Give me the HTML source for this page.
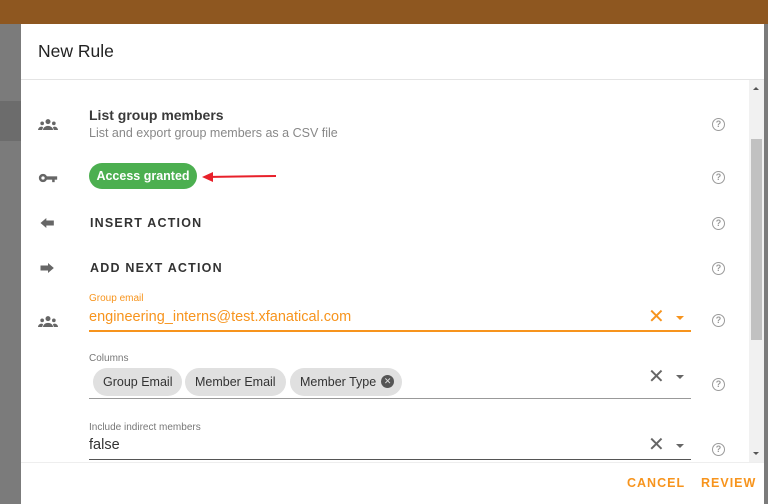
<!DOCTYPE html>
<html><head><style>
*{margin:0;padding:0;box-sizing:border-box}
body{width:768px;height:504px;overflow:hidden;background:#7b7b7b;font-family:"Liberation Sans",Arial,sans-serif;position:relative}
.top{position:absolute;left:0;top:0;width:768px;height:24px;background:#8e5720}
.band{position:absolute;left:0;top:101px;width:21px;height:40px;background:#6c6c6c}
.dlg{position:absolute;left:21px;top:24px;width:743px;height:480px;background:#fff}
.t{position:absolute;color:#222}
.ic{position:absolute;left:17px;width:20px;height:16px}
.help{position:absolute;left:691px;width:13px;height:13px;border:1.3px solid #9a9a9a;border-radius:50%;font-size:9px;color:#9a9a9a;text-align:center;line-height:11px;font-weight:bold}
.lbl{position:absolute;left:68px;font-size:10px;color:#777}
.chip{position:absolute;top:344px;height:28px;border-radius:14px;background:#e0e0e0;font-size:12.5px;color:#333;line-height:28px;padding:0 10px}
.x{position:absolute;font-size:20px;color:#666;line-height:20px}
.arr{position:absolute;width:0;height:0;border-left:4px solid transparent;border-right:4px solid transparent;border-top:4px solid #666}
</style></head><body>
<div class="top"></div>
<div class="band"></div>
<div class="dlg">
 <div class="t" style="left:17px;top:17px;font-size:17.5px">New Rule</div>
 <div style="position:absolute;left:0;top:55px;width:743px;height:1px;background:#e4e4e4"></div>
 <div style="position:absolute;left:728px;top:56px;width:15px;height:382px;background:#f1f1f1"></div>
 <div style="position:absolute;left:730px;top:115px;width:11px;height:201px;background:#c1c1c1"></div>
 <div style="position:absolute;left:732px;top:63px;border-left:3px solid transparent;border-right:3px solid transparent;border-bottom:3px solid #555"></div>
 <div style="position:absolute;left:732px;top:428px;border-left:3px solid transparent;border-right:3px solid transparent;border-top:3px solid #555"></div>

 <svg class="ic" style="top:93px" viewBox="0 0 24 16"><g fill="#666"><circle cx="12" cy="4" r="3"/><circle cx="5" cy="6" r="2.2"/><circle cx="19" cy="6" r="2.2"/><path d="M6 14c0-3 3-5 6-5s6 2 6 5z"/><path d="M0 14c0-2 2-4 4-4 1 0 2 .5 2 1l-1 3z"/><path d="M24 14c0-2-2-4-4-4-1 0-2 .5-2 1l1 3z"/></g></svg>
 <div class="t" style="left:68px;top:83px;font-size:14px;font-weight:bold;color:#3a3a3a">List group members</div>
 <div class="t" style="left:68px;top:102px;font-size:12.5px;color:#888">List and export group members as a CSV file</div>
 <div class="help" style="top:94px">?</div>

 <svg class="ic" style="top:146px" viewBox="0 0 24 16"><g fill="#666"><circle cx="6" cy="8" r="5"/><rect x="9" y="6" width="14" height="4"/><rect x="17" y="8" width="3" height="5"/></g><circle cx="6" cy="8" r="2" fill="#fff"/></svg>
 <div style="position:absolute;left:68px;top:139px;width:108px;height:26px;border-radius:13px;background:#4caf50;color:#fff;font-size:12.5px;font-weight:bold;line-height:26px;text-align:center">Access granted</div>
 <svg style="position:absolute;left:180px;top:147px" width="76" height="12"><path d="M4 6 L75 5" stroke="#e8202a" stroke-width="2"/><path d="M1 6 L12 1 L12 11z" fill="#e8202a"/></svg>
 <div class="help" style="top:147px">?</div>

 <svg class="ic" style="top:191px" viewBox="0 0 24 16"><path d="M3 8 L10 2 V5 H19 V11 H10 V14z" fill="#666"/></svg>
 <div class="t" style="left:69px;top:192px;font-size:12.5px;font-weight:bold;letter-spacing:1.2px;color:#333">INSERT ACTION</div>
 <div class="help" style="top:193px">?</div>

 <svg class="ic" style="top:236px" viewBox="0 0 24 16"><path d="M19 8 L12 2 V5 H3 V11 H12 V14z" fill="#666"/></svg>
 <div class="t" style="left:69px;top:237px;font-size:12.5px;font-weight:bold;letter-spacing:1.2px;color:#333">ADD NEXT ACTION</div>
 <div class="help" style="top:238px">?</div>

 <svg class="ic" style="top:290px" viewBox="0 0 24 16"><g fill="#666"><circle cx="12" cy="4" r="3"/><circle cx="5" cy="6" r="2.2"/><circle cx="19" cy="6" r="2.2"/><path d="M6 14c0-3 3-5 6-5s6 2 6 5z"/><path d="M0 14c0-2 2-4 4-4 1 0 2 .5 2 1l-1 3z"/><path d="M24 14c0-2-2-4-4-4-1 0-2 .5-2 1l1 3z"/></g></svg>
 <div class="lbl" style="top:269px;color:#f7941d">Group email</div>
 <div class="t" style="left:68px;top:285px;font-size:14.5px;color:#f7941d">engineering_interns@test.xfanatical.com</div>
 <div class="x" style="left:627px;top:283px;color:#f7941d">✕</div>
 <div class="arr" style="left:655px;top:292px;border-top-color:#f7941d"></div>
 <div style="position:absolute;left:68px;top:306px;width:602px;height:2px;background:#f7941d"></div>
 <div class="help" style="top:290px">?</div>

 <div class="lbl" style="top:329px">Columns</div>
 <div class="chip" style="left:72px">Group Email</div>
 <div class="chip" style="left:164px">Member Email</div>
 <div class="chip" style="left:269px;padding-right:26px">Member Type<span style="position:absolute;right:8px;top:7px;width:13px;height:13px;border-radius:50%;background:#555;color:#e0e0e0;font-size:9px;line-height:13px;text-align:center">✕</span></div>
 <div class="x" style="left:627px;top:343px">✕</div>
 <div class="arr" style="left:655px;top:351px"></div>
 <div style="position:absolute;left:68px;top:374px;width:602px;height:1px;background:#999"></div>
 <div class="help" style="top:354px">?</div>

 <div class="lbl" style="top:398px">Include indirect members</div>
 <div class="t" style="left:68px;top:413px;font-size:14.5px;color:#333">false</div>
 <div class="x" style="left:627px;top:411px">✕</div>
 <div class="arr" style="left:655px;top:420px"></div>
 <div style="position:absolute;left:68px;top:435px;width:602px;height:1px;background:#555"></div>
 <div class="help" style="top:419px">?</div>

 <div style="position:absolute;left:0;top:438px;width:743px;height:1px;background:#eee"></div>
 <div class="t" style="left:606px;top:452px;font-size:12.5px;font-weight:bold;letter-spacing:1px;color:#f7941d">CANCEL</div>
 <div class="t" style="left:680px;top:452px;font-size:12.5px;font-weight:bold;letter-spacing:1px;color:#f7941d">REVIEW</div>
</div>
</body></html>
